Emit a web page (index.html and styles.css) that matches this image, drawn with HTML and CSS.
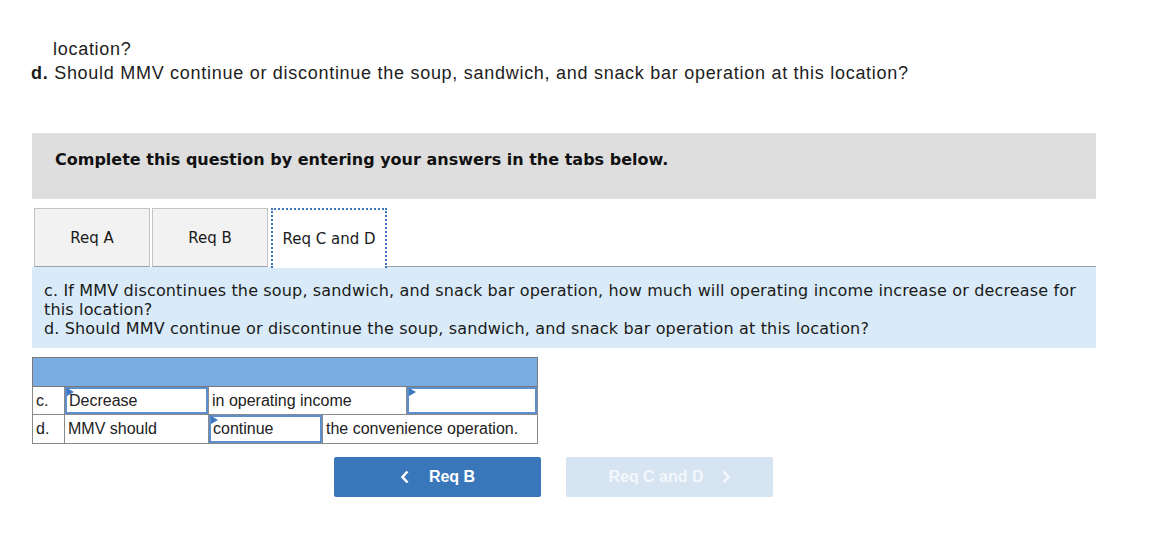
FILE: index.html
```html
<!DOCTYPE html>
<html>
<head>
<meta charset="utf-8">
<link rel="stylesheet" href="styles.css">
</head>
<body>
<div class="intro">
  <p class="cont">location?</p>
  <p class="item"><b>d.</b> Should MMV continue or discontinue the soup, sandwich, and snack bar operation at this location?</p>
</div>

<div class="banner">Complete this question by entering your answers in the tabs below.</div>

<div class="tabs">
  <div class="tab">Req A</div>
  <div class="tab">Req B</div>
  <div class="tab active">Req C and D</div>
  <div class="tabline"></div>
</div>

<div class="panel">
  <p>c. If MMV discontinues the soup, sandwich, and snack bar operation, how much will operating income increase or decrease for this location?</p>
  <p>d. Should MMV continue or discontinue the soup, sandwich, and snack bar operation at this location?</p>
</div>

<table class="answers">
  <colgroup>
    <col class="c1"><col class="c2"><col class="c3"><col class="c4"><col class="c5">
  </colgroup>
  <tr class="head"><td colspan="5"></td></tr>
  <tr>
    <td>c.</td>
    <td class="inp"><span class="flag"></span>Decrease</td>
    <td colspan="2">in operating income</td>
    <td class="inp"><span class="flag"></span></td>
  </tr>
  <tr>
    <td>d.</td>
    <td>MMV should</td>
    <td class="inp"><span class="flag"></span>continue</td>
    <td colspan="2">the convenience operation.</td>
  </tr>
</table>

<div class="nav">
  <button class="btn prev"><svg class="chev" width="9" height="14" viewBox="0 0 9 14"><polyline points="7.5,1.5 2.5,7 7.5,12.5" fill="none" stroke="currentColor" stroke-width="2.6"/></svg>Req B</button>
  <button class="btn next">Req C and D<svg class="chev" width="9" height="14" viewBox="0 0 9 14"><polyline points="1.5,1.5 6.5,7 1.5,12.5" fill="none" stroke="currentColor" stroke-width="2.6"/></svg></button>
</div>
</body>
</html>
```

FILE: styles.css
```css
html, body {
  margin: 0;
  padding: 0;
  background: #fff;
  color: #1b1b1b;
}
body {
  width: 1170px;
  height: 554px;
  overflow: hidden;
}
.intro {
  padding: 37px 0 0 31px;
  font-family: "Liberation Sans", Arial, sans-serif;
  font-size: 18px;
  letter-spacing: 0.72px;
  line-height: 24px;
  color: #1d1d1d;
}
.intro p {
  margin: 0;
}
.intro .cont {
  padding-left: 22px;
}
.intro b {
  font-weight: 700;
}
.banner {
  margin: 48px 0 0 32px;
  width: 1064px;
  height: 66px;
  box-sizing: border-box;
  background: #dedede;
  padding: 17px 0 0 23px;
  font-family: Verdana, "DejaVu Sans", sans-serif;
  font-weight: bold;
  font-size: 16px;
  line-height: 20px;
  color: #111;
}
.tabs {
  display: flex;
  align-items: flex-end;
  margin: 9px 0 0 32px;
  width: 1064px;
  height: 59px;
}
.tab {
  width: 116px;
  height: 59px;
  box-sizing: border-box;
  margin-left: 2px;
  border: 1px solid #c4c4c4;
  border-bottom: 1px solid #a0a0a0;
  background: #f2f2f2;
  font-family: Verdana, "DejaVu Sans", sans-serif;
  font-size: 15px;
  color: #1a1a1a;
  display: flex;
  align-items: center;
  justify-content: center;
}
.tab + .tab {
  margin-left: 2px;
}
.tab.active {
  margin-left: 3px;
  background: #fff;
  border: 2px dotted #3b74b8;
  border-bottom: none;
  height: 60px;
  margin-bottom: -1px;
  position: relative;
  z-index: 1;
}
.tabline {
  flex: 1;
  height: 1px;
  background: #a0a0a0;
}
.panel {
  margin: 0 0 0 32px;
  width: 1064px;
  box-sizing: border-box;
  background: #d9eaf8;
  padding: 14px 12px 10px 12px;
  font-family: Verdana, "DejaVu Sans", sans-serif;
  font-size: 16px;
  letter-spacing: 0.15px;
  line-height: 19px;
  color: #1a1a1a;
}
.panel p {
  margin: 0;
}
.answers {
  margin: 9px 0 0 32px;
  border-collapse: collapse;
  table-layout: fixed;
  width: 505px;
  font-family: "Liberation Sans", Arial, sans-serif;
  font-size: 16px;
  color: #222;
}
.c1 { width: 32px; }
.c2 { width: 144px; }
.c3 { width: 114px; }
.c4 { width: 84px; }
.c5 { width: 131px; }
.answers td {
  border: 1px solid #8a8a8a;
  height: 28px;
  padding: 0 3px;
  box-sizing: border-box;
  white-space: nowrap;
  overflow: hidden;
}
.answers tr:last-child td {
  height: 29px;
}
.answers tr.head td {
  background: #79ade2;
  height: 29px;
  border-color: #7a7a7a;
}
.answers td.inp {
  position: relative;
  box-shadow: inset 0 0 0 2px #5d8fcc;
  padding-left: 4px;
}
.flag {
  position: absolute;
  left: 2px;
  top: 1px;
  width: 0;
  height: 0;
  border-left: 7px solid #3d76c1;
  border-top: 4px solid transparent;
  border-bottom: 4px solid transparent;
}
.nav {
  display: flex;
  gap: 25px;
  margin: 13px 0 0 334px;
}
.btn {
  width: 207px;
  height: 40px;
  border: none;
  border-radius: 2px;
  font-family: "Liberation Sans", Arial, sans-serif;
  font-weight: bold;
  font-size: 16px;
  color: #fff;
  display: flex;
  align-items: center;
  justify-content: center;
  padding: 0;
}
.btn.prev {
  background: #3a77ba;
}
.btn.next {
  background: #d6e3f1;
  color: #f4f7fb;
}
.prev .chev {
  margin-right: 20px;
}
.next .chev {
  margin-left: 18px;
}
```
